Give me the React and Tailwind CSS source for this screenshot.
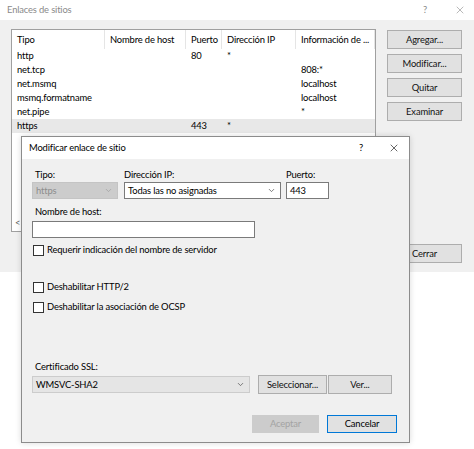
import { ChevronDown, X } from 'lucide-react';

const cols = [
  { label: 'Tipo', w: 'w-[93px]' },
  { label: 'Nombre de host', w: 'w-[81px]' },
  { label: 'Puerto', w: 'w-[36px]' },
  { label: 'Dirección IP', w: 'w-[74px]' },
  { label: 'Información de ...', w: 'w-[79px]' },
];

const rows = [
  ['http', '', '80', '*', ''],
  ['net.tcp', '', '', '', '808:*'],
  ['net.msmq', '', '', '', 'localhost'],
  ['msmq.formatname', '', '', '', 'localhost'],
  ['net.pipe', '', '', '', '*'],
  ['https', '', '443', '*', ''],
];

function WinButton({ children, className = '' }) {
  return (
    <div className={`h-[19px] flex items-center justify-center bg-[#e1e1e1] border border-[#adadad] text-[#111] ${className}`}>
      {children}
    </div>
  );
}

function Check({ label }) {
  return (
    <div className="flex items-center h-[14px] pl-[1px]">
      <div className="w-[11px] h-[11px] border border-[#333] bg-white" />
      <span className="ml-[3px]">{label}</span>
    </div>
  );
}

export default function App() {
  return (
    <div className="relative w-[474px] h-[449px] bg-white overflow-hidden text-[9.4px] tracking-[-0.15px] leading-[14px] text-black font-['Lato',sans-serif]">
      {/* outer window */}
      <div className="h-[272px] flex flex-col">
        <div className="h-[20px] bg-white flex items-center pl-[7px] text-[#8a8a8a]">
          <span>Enlaces de sitios</span>
          <span className="ml-auto mr-[27px]">?</span>
          <X className="w-[12px] h-[12px] mr-[8px]" strokeWidth={1.2} />
        </div>
        <div className="flex-1 bg-[#f0f0f0] flex pt-[9px] pl-[11px] pb-[9px]">
          <div className="w-[365px] h-[203px] border border-[#a0a0a0] bg-white flex flex-col">
            <div className="flex h-[19px] items-center">
              {cols.map((c, i) => (
                <div key={i} className={`${c.w} h-full flex items-center pl-[5px] border-r border-[#e5e5e5] whitespace-nowrap overflow-hidden`}>
                  {c.label}
                </div>
              ))}
            </div>
            {rows.map((r, ri) => (
              <div key={ri} className={`flex h-[14px] items-center ${ri === 5 ? 'bg-[#e8e8e8]' : ''}`}>
                {r.map((v, ci) => (
                  <div key={ci} className={`${cols[ci].w} pl-[5px] whitespace-nowrap`}>{v}</div>
                ))}
              </div>
            ))}
            <div className="mt-auto h-[16px] flex items-center pl-[3px] text-[#606060]">&lt;</div>
          </div>
          <div className="ml-[11px] w-[75px] flex flex-col gap-[5px] pt-[1px]">
            <WinButton>Agregar...</WinButton>
            <WinButton>Modificar...</WinButton>
            <WinButton>Quitar</WinButton>
            <WinButton>Examinar</WinButton>
            <WinButton className="mt-auto">Cerrar</WinButton>
          </div>
        </div>
      </div>

      {/* modal dialog */}
      <div className="absolute left-[21px] top-[136px] w-[389px] h-[307px] border border-[#8c8c8c] bg-[#f0f0f0] flex flex-col shadow-[0_0_6px_rgba(0,0,0,0.15)]">
        <div className="h-[22px] bg-white flex items-center pl-[7px]">
          <span>Modificar enlace de sitio</span>
          <span className="ml-auto mr-[25px]">?</span>
          <X className="w-[12px] h-[12px] mr-[9px]" strokeWidth={1.2} />
        </div>
        <div className="flex-1 flex flex-col pl-[10px] pt-[9px]">
          <div className="flex">
            <div className="w-[86px] flex flex-col">
              <span className="pl-[3px] h-[14px]">Tipo:</span>
              <div className="h-[17px] bg-[#cccccc] border border-[#c4c4c4] flex items-center pl-[3px] text-[#8d8d8d]">
                <span>https</span>
                <ChevronDown className="ml-auto mr-[4px] w-[9px] h-[9px] text-[#a0a0a0]" />
              </div>
            </div>
            <div className="ml-[6px] w-[157px] flex flex-col">
              <span className="h-[14px]">Dirección IP:</span>
              <div className="h-[17px] bg-white border border-[#7a7a7a] flex items-center pl-[3px]">
                <span>Todas las no asignadas</span>
                <ChevronDown className="ml-auto mr-[4px] w-[9px] h-[9px] text-[#555]" />
              </div>
            </div>
            <div className="ml-[5px] w-[43px] flex flex-col">
              <span className="h-[14px]">Puerto:</span>
              <div className="h-[17px] bg-white border border-[#7a7a7a] flex items-center pl-[3px]">443</div>
            </div>
          </div>

          <span className="pl-[3px] mt-[6px] h-[14px]">Nombre de host:</span>
          <div className="mt-[2px] w-[223px] h-[17px] bg-white border border-[#7a7a7a]" />
          <div className="mt-[5px]">
            <Check label="Requerir indicación del nombre de servidor" />
          </div>

          <div className="mt-[23px] flex flex-col gap-[6px]">
            <Check label="Deshabilitar HTTP/2" />
            <Check label="Deshabilitar la asociación de OCSP" />
          </div>

          <span className="pl-[3px] mt-[46px] h-[14px]">Certificado SSL:</span>
          <div className="flex items-center mt-[1px]">
            <div className="w-[218px] h-[17px] bg-[#e5e5e5] border border-[#cccccc] flex items-center pl-[3px]">
              <span>WMSVC-SHA2</span>
              <ChevronDown className="ml-auto mr-[4px] w-[9px] h-[9px] text-[#555]" />
            </div>
            <WinButton className="ml-[8px] w-[69px]">Seleccionar...</WinButton>
            <WinButton className="ml-[1px] w-[64px]">Ver...</WinButton>
          </div>

          <div className="flex mt-[21px] pl-[220px]">
            <div className="w-[67px] h-[18px] bg-[#cccccc] flex items-center justify-center text-[#a3a3a3]">Aceptar</div>
            <div className="ml-[8px] w-[70px] h-[18px] bg-[#e1e1e1] border border-[#0078d7] flex items-center justify-center">Cancelar</div>
          </div>
        </div>
      </div>
    </div>
  );
}
